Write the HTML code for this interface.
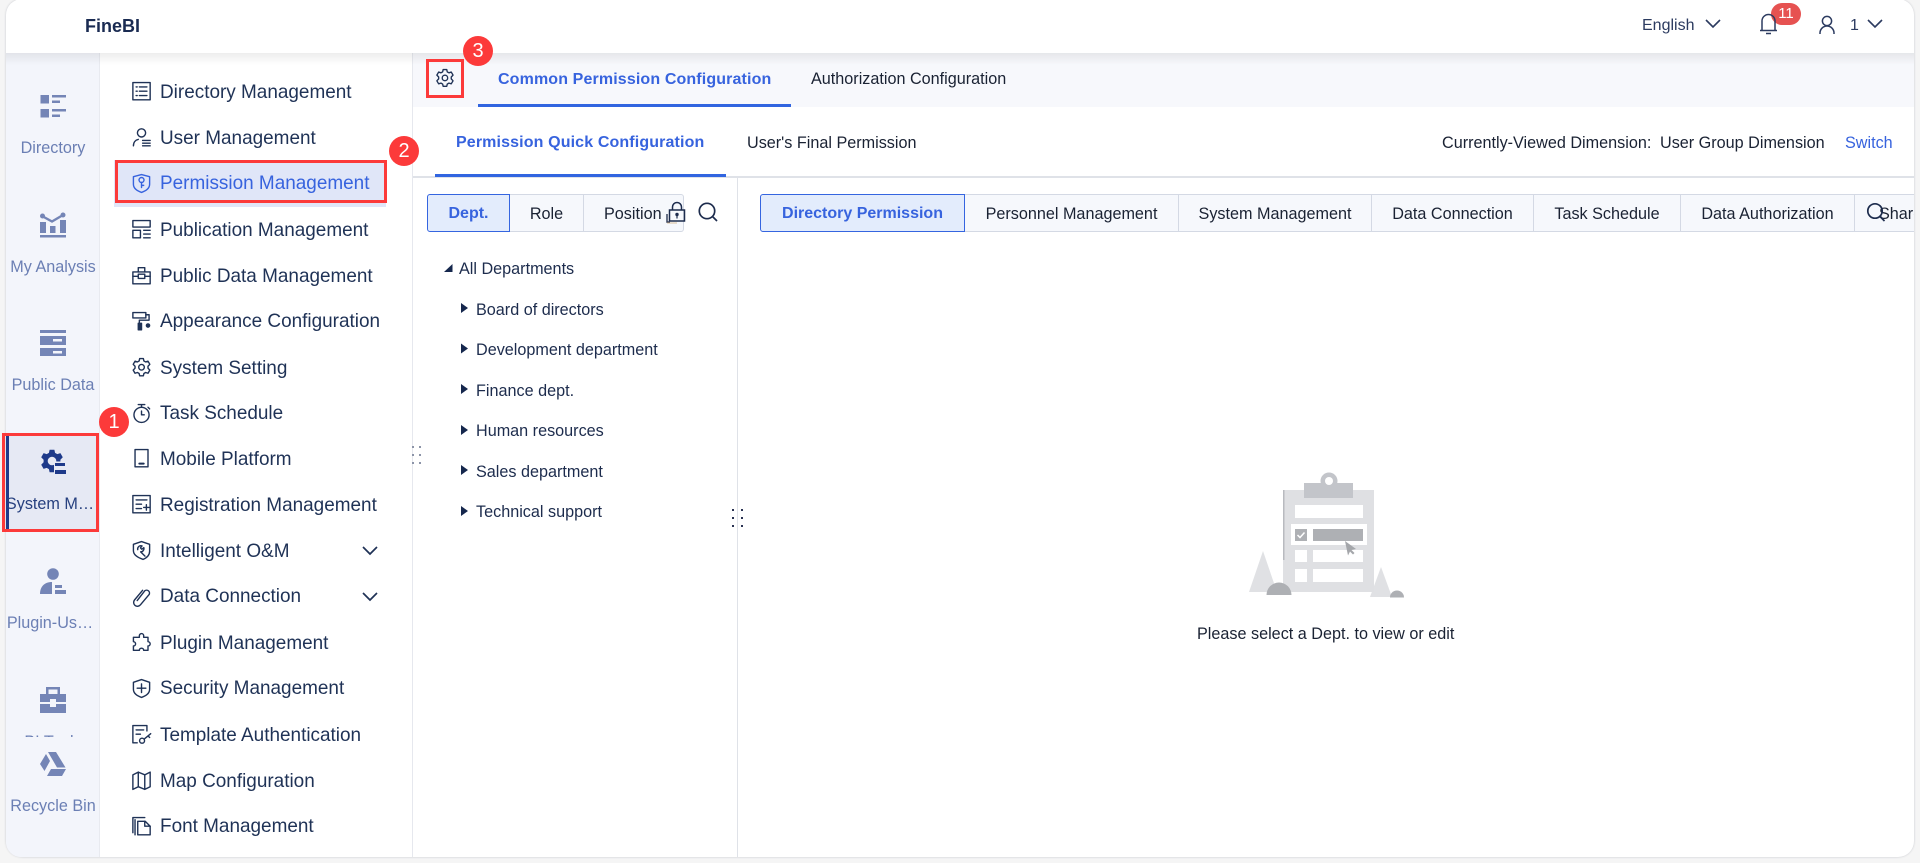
<!DOCTYPE html>
<html><head><meta charset="utf-8"><title>FineBI</title>
<style>
html,body{margin:0;padding:0;width:1920px;height:863px;overflow:hidden;background:#f5f5f5;font-family:"Liberation Sans",Arial,sans-serif;}
#card{position:absolute;left:6px;top:-1px;width:1908px;height:858px;background:#fff;border-radius:16px;overflow:hidden;box-shadow:0 0 2px #c4c6cc;}
.a{position:absolute;white-space:nowrap;}
.b{position:absolute;box-sizing:border-box;}
.m{position:absolute;left:160px;font-size:18.95px;line-height:24px;color:#1f3256;white-space:nowrap;}
.n{position:absolute;left:6px;width:94px;text-align:center;font-size:16.2px;line-height:20px;color:#6b7fb4;white-space:nowrap;}
.t{position:absolute;font-size:16.2px;line-height:20px;white-space:nowrap;color:#1a2233;}
.tr{position:absolute;font-size:16.2px;line-height:20px;white-space:nowrap;color:#1d2c4d;}
.bd{font-weight:bold;font-size:16px;color:#3763de;letter-spacing:.13px;}
.seg{position:absolute;top:194px;height:38px;box-sizing:border-box;background:#f6f8fc;border:1px solid #d4d9e4;border-left:0;text-align:center;font-size:16.2px;line-height:38px;color:#1a2233;white-space:nowrap;overflow:hidden;}
.seg.on{background:#e3ecfc;border:1px solid #3565e0;font-weight:bold;font-size:16px;color:#3763de;}
.c{position:absolute;width:30px;height:30px;border-radius:50%;background:#fc3a3a;color:#fff;font-size:20px;line-height:30px;text-align:center;}
.bx{position:absolute;box-sizing:border-box;border:3px solid #fc3a3a;}
svg{position:absolute;left:0;top:0;}
.i{fill:none;stroke:#1f3256;stroke-width:1.3;stroke-linejoin:round;stroke-linecap:round;}
</style></head><body>
<div id="card"></div>

<!-- backgrounds -->
<div class="b" style="left:6px;top:53px;width:94px;height:804px;background:#f3f5fb;border-bottom-left-radius:15px;border-right:1px solid #e8eaf0;"></div>
<div class="b" style="left:6px;top:433px;width:94px;height:99px;background:#e6e9f4;"></div>
<div class="b" style="left:6px;top:436px;width:3px;height:93px;background:#1f3a8a;"></div>
<div class="b" style="left:412px;top:53px;width:1px;height:804px;background:#e6e8ee;"></div>
<div class="b" style="left:413px;top:53px;width:1501px;height:54px;background:#f7f8fc;"></div>
<div class="b" style="left:114px;top:160px;width:272px;height:47px;background:#e0e6f8;"></div>
<div class="b" style="left:6px;top:53px;width:1908px;height:12px;background:linear-gradient(#00000012,#00000000);"></div>
<div class="b" style="left:413px;top:176px;width:1501px;height:2px;background:#dfe2e8;"></div>
<div class="b" style="left:737px;top:178px;width:1px;height:679px;background:#dfe2e8;"></div>
<div class="b" style="left:478px;top:104px;width:313px;height:3px;background:#3165e0;"></div>
<div class="b" style="left:435px;top:174px;width:291px;height:3px;background:#3165e0;"></div>

<!-- header -->
<div class="a" style="left:85px;top:15px;font-size:18px;line-height:22px;font-weight:bold;color:#1a2b52;">FineBI</div>
<div class="a" style="left:1642px;top:16px;font-size:16px;line-height:20px;color:#2c3b60;">English</div>
<div class="a" style="left:1850px;top:16px;font-size:16px;line-height:20px;color:#2c3b60;">1</div>
<div class="b" style="left:1771px;top:3px;width:30px;height:22px;border-radius:11px;background:#e65251;color:#fff;font-size:15px;line-height:21px;text-align:center;">11</div>

<!-- left nav labels -->
<div class="n" style="top:138px;">Directory</div>
<div class="n" style="top:257px;">My Analysis</div>
<div class="n" style="top:375px;">Public Data</div>
<div class="n" style="top:494px;color:#27407f;left:0;width:100px;">System M…</div>
<div class="n" style="top:613px;left:0;width:100px;">Plugin-Us…</div>
<div class="b" style="left:6px;top:700px;width:94px;height:37px;overflow:hidden;"><div class="n" style="left:0;top:32px;">BI Tools</div></div>
<div class="n" style="top:796px;">Recycle Bin</div>

<!-- sidebar labels -->
<div class="m" style="top:81px;">Directory Management</div>
<div class="m" style="top:127px;">User Management</div>
<div class="m" style="top:172px;color:#3763de;">Permission Management</div>
<div class="m" style="top:219px;">Publication Management</div>
<div class="m" style="top:265px;">Public Data Management</div>
<div class="m" style="top:310px;">Appearance Configuration</div>
<div class="m" style="top:357px;">System Setting</div>
<div class="m" style="top:402px;">Task Schedule</div>
<div class="m" style="top:448px;">Mobile Platform</div>
<div class="m" style="top:494px;">Registration Management</div>
<div class="m" style="top:540px;">Intelligent O&amp;M</div>
<div class="m" style="top:585px;">Data Connection</div>
<div class="m" style="top:632px;">Plugin Management</div>
<div class="m" style="top:677px;">Security Management</div>
<div class="m" style="top:724px;">Template Authentication</div>
<div class="m" style="top:770px;">Map Configuration</div>
<div class="m" style="top:815px;">Font Management</div>

<!-- tabs -->
<div class="t bd" style="left:498px;top:70px;">Common Permission Configuration</div>
<div class="t" style="left:811px;top:69px;">Authorization Configuration</div>
<div class="t bd" style="left:456px;top:133px;">Permission Quick Configuration</div>
<div class="t" style="left:747px;top:133px;">User's Final Permission</div>
<div class="t" style="left:1442px;top:133px;">Currently-Viewed Dimension:</div>
<div class="t" style="left:1660px;top:133px;">User Group Dimension</div>
<div class="t" style="left:1845px;top:133px;color:#3763de;">Switch</div>

<div class="seg on" style="left:427px;width:83px;border-radius:3px 0 0 3px;">Dept.</div>
<div class="seg" style="left:510px;width:74px;">Role</div>
<div class="seg" style="left:584px;width:100px;border-radius:0 3px 3px 0;text-align:left;padding-left:20px;">Position</div>

<div class="seg on" style="left:760px;width:205px;border-radius:3px 0 0 3px;">Directory Permission</div>
<div class="seg" style="left:965px;width:214px;">Personnel Management</div>
<div class="seg" style="left:1179px;width:193px;">System Management</div>
<div class="seg" style="left:1372px;width:162px;">Data Connection</div>
<div class="seg" style="left:1534px;width:147px;">Task Schedule</div>
<div class="seg" style="left:1681px;width:174px;">Data Authorization</div>
<div class="seg" style="left:1855px;width:59px;text-align:left;padding-left:24px;border-right:0;">Share</div>

<!-- tree -->
<div class="tr" style="left:459px;top:259px;">All Departments</div>
<div class="tr" style="left:476px;top:300px;">Board of directors</div>
<div class="tr" style="left:476px;top:340px;">Development department</div>
<div class="tr" style="left:476px;top:381px;">Finance dept.</div>
<div class="tr" style="left:476px;top:421px;">Human resources</div>
<div class="tr" style="left:476px;top:462px;">Sales department</div>
<div class="tr" style="left:476px;top:502px;">Technical support</div>

<div class="t" style="left:1197px;top:624px;">Please select a Dept. to view or edit</div>

<!-- all icons -->
<svg width="1920" height="863" viewBox="0 0 1920 863">
  <!-- header icons -->
  <path d="M1706 20l7 7 7-7" fill="none" stroke="#2c3b60" stroke-width="1.6"/>
  <path d="M1868 20l7 7 7-7" fill="none" stroke="#2c3b60" stroke-width="1.6"/>
  <path d="M1760 30.500h17M1762 30v-9a6.500 6.500 0 0 1 13 0v9M1766 33.500h5" fill="none" stroke="#2c3b60" stroke-width="1.5"/>
  <circle cx="1827" cy="21" r="4.600" fill="none" stroke="#2c3b60" stroke-width="1.5"/>
  <path d="M1820 34v-1a7 7 0 0 1 14 0v1" fill="none" stroke="#2c3b60" stroke-width="1.5"/>

  <!-- left nav -->
  <g fill="#7485b6">
    <rect x="40.500" y="95" width="8.500" height="8.500"/><rect x="40.500" y="109" width="8.500" height="8.500"/>
    <rect x="52" y="95" width="14" height="2.500"/><rect x="52" y="100.500" width="8" height="2.500"/>
    <rect x="52" y="109" width="14" height="2.500"/><rect x="52" y="114.500" width="8" height="2.500"/>

    <rect x="40" y="222" width="6" height="11"/><rect x="50" y="226" width="5.500" height="7"/><rect x="60" y="220" width="6" height="13"/>
    <rect x="40" y="235" width="26" height="2.500"/>
    <path d="M42 216l10 5.500L63 215" fill="none" stroke="#7485b6" stroke-width="2.400"/>
    <circle cx="42.500" cy="216" r="2.500"/><circle cx="63" cy="215" r="2.500"/>

    <rect x="40" y="330" width="26" height="3"/>
    <path fill-rule="evenodd" d="M40 336h26v9H40zM53 339v2.500h9V339z"/>
    <path fill-rule="evenodd" d="M40 348h26v8H40zM53 351v2.500h9V351z"/>

    <circle cx="53" cy="574" r="5.800"/>
    <path d="M40 594c0-7 4-12 12-12v12z"/>
    <rect x="55" y="585" width="7" height="3"/><rect x="55" y="590" width="11" height="4"/>

    <path fill-rule="evenodd" d="M46 694v-7h14v7h6v8H56v-3h-6v3H40v-8zM48.500 694h9v-4.500h-9z"/>
    <path d="M40 704h10v3h6v-3h10v9H40z"/>

    <path d="M48 752h8l9.500 15.500H57zM46 754l4 7-5.500 10L40 764zM47 776l4-7h15l-4 7z"/>
  </g>
  <!-- active nav gear -->
  <path transform="translate(39.400,448.400) scale(1.4)" fill="#1e3a8a" d="M7.300 1h3.400l.5 2.200 1.600.9 2.200-.7 1.700 2.900-1.700 1.800v1.800l1.700 1.800-1.700 2.900-2.200-.7-1.600.9-.5 2.200H7.300l-.5-2.200-1.600-.9-2.200.7-1.700-2.900L3 9.900V8.100L1.300 6.300 3 3.400l2.200.7 1.600-.9z"/>
  <circle cx="52" cy="461" r="4.300" fill="#e6e9f4"/>
  <rect x="54" y="461.500" width="13" height="14" fill="#e6e9f4"/>
  <rect x="55" y="463" width="10" height="3" fill="#1e3a8a"/><rect x="55" y="470" width="11" height="4" fill="#1e3a8a"/>

  <!-- sidebar icons -->
  <g class="i" transform="translate(131.800,81.500) scale(1.08)"><rect x="1" y="1" width="16" height="16"/><path d="M4 5h1M7 5h7M4 9h1M7 9h7M4 13h1M7 13h7"/></g>
  <g class="i" transform="translate(131.800,127.500) scale(1.08)"><circle cx="9" cy="5" r="3.800"/><path d="M1.500 17c0-3.500 2-5.500 4.500-6M10 12h7M10 14.500h7M10 17h7"/></g>
  <g class="i" style="stroke:#3763de" transform="translate(131.800,173.500) scale(1.08)"><path d="M1.500 3L9 1l7.500 2v7c0 3.500-3 6-7.500 7.500C4.500 16 1.500 13.500 1.500 10z"/><circle cx="9" cy="6" r="2.300"/><path d="M9 8.300V13M9 11h2"/></g>
  <g class="i" transform="translate(131.800,219.500) scale(1.08)"><rect x="1" y="1" width="16" height="6"/><rect x="1" y="10" width="7" height="7"/><path d="M11 10h6M11 13.500h6M11 17h6"/></g>
  <g class="i" transform="translate(131.800,265.500) scale(1.08)"><rect x="1" y="6" width="16" height="11"/><path d="M6 6V2h6v4M1 10h5M12 10h5M6 8h6v4H6z"/></g>
  <g class="i" transform="translate(131.800,311.500) scale(1.08)"><rect x="1" y="1" width="12" height="5"/><path d="M13 3h3v5H7v3"/><rect x="6" y="11" width="3" height="6" fill="#1f3256"/><circle cx="15" cy="13" r="1.500" fill="#1f3256"/></g>
  <g class="i" transform="translate(131.800,357.500) scale(1.08)"><path d="M7.300 1h3.400l.5 2.200 1.600.9 2.200-.7 1.700 2.900-1.700 1.800v1.800l1.700 1.800-1.700 2.900-2.200-.7-1.600.9-.5 2.200H7.300l-.5-2.200-1.600-.9-2.200.7-1.700-2.900L3 9.900V8.100L1.300 6.300 3 3.400l2.200.7 1.600-.9z"/><circle cx="9" cy="9" r="2.600"/></g>
  <g class="i" transform="translate(131.800,403.500) scale(1.08)"><circle cx="9" cy="10.500" r="7"/><path d="M6 1h6M9 1v2.500M9 7v3.500h2.500M15 3.500l1.500 1.500"/></g>
  <g class="i" transform="translate(131.800,448.500) scale(1.08)"><rect x="3" y="1" width="12" height="16"/><path d="M7 14h4" stroke-width="1.800"/></g>
  <g class="i" transform="translate(131.800,494.500) scale(1.08)"><rect x="1" y="1" width="16" height="16"/><path d="M4 5h10M4 9h5M4 13h5M11 12h5M13.500 9.500v5"/></g>
  <g class="i" transform="translate(131.800,540.500) scale(1.08)"><path d="M1.500 3.500L9 1l7.500 2.500V10c0 3.500-2.500 6-6 7.500C4.500 15.500 1.500 13 1.500 9.500z"/><path d="M5.500 8.500a3 3 0 0 1 4-3.500L8 6.800l1.300 1.300 1.800-1.500a3 3 0 0 1-2.900 3.900l4 4"/></g>
  <g class="i" transform="translate(131.800,586.500) scale(1.08)"><path d="M5 13L12 4a2.700 2.700 0 0 1 4 3.500l-8 9.500a3.500 3.500 0 0 1-5.500-4.500L10 3.500"/></g>
  <g class="i" transform="translate(131.800,632.500) scale(1.08)"><path d="M7 3a2 2 0 0 1 4 0v1.500h4v4a2 2 0 0 1 0 4h0v4H11a2 2 0 0 0-4 0H1.500v-4a2 2 0 0 0 0-4v0l0-4H7z"/></g>
  <g class="i" transform="translate(131.800,678.500) scale(1.08)"><path d="M1.500 3.500L9 1l7.500 2.500V10c0 3.500-3 6-7.500 7.500C4.500 16 1.500 13.500 1.500 10z"/><path d="M5 9h8M9 5v8"/></g>
  <g class="i" transform="translate(131.800,724.500) scale(1.08)"><path d="M1 17V1h13v5M4 5h7M4 9h4M1 17h4"/><circle cx="9.500" cy="15" r="2.300"/><path d="M11.500 13.500l6-5M15 10.500l1.500 1.500"/></g>
  <g class="i" transform="translate(131.800,770.500) scale(1.08)"><path d="M1 4l5-2.500 6 2.500 5-2.500V15l-5 2.500L6 15l-5 2.500zM6 1.500V15M12 4v13.500"/></g>
  <g class="i" transform="translate(131.800,816.500) scale(1.08)"><path d="M3 17V3M1 15V1h11"/><path d="M5.500 17V4.500h7l4.500 4.500v8z"/><path d="M12 4.500V9h5"/></g>
  <path d="M363 547l7 7 7-7M363 593l7 7 7-7" fill="none" stroke="#1f3256" stroke-width="1.700"/>

  <!-- gear tab icon -->
  <g class="i" style="stroke-width:1.300" transform="translate(435.500,68.500) scale(1.05)"><path d="M7.300 1h3.400l.5 2.200 1.600.9 2.200-.7 1.700 2.900-1.700 1.800v1.800l1.700 1.800-1.700 2.900-2.200-.7-1.600.9-.5 2.200H7.300l-.5-2.200-1.600-.9-2.200.7-1.700-2.900L3 9.900V8.100L1.300 6.300 3 3.400l2.200.7 1.600-.9z"/><circle cx="9" cy="9" r="2.600"/></g>

  <!-- lock + search -->
  <g fill="none" stroke="#1d2c4d" stroke-width="1.500">
    <rect x="669.500" y="210" width="15" height="11"/>
    <path d="M672.500 210v-3a4.500 4.500 0 0 1 9 0v3"/>
    <path d="M667 214v8h3" stroke="#3a4560"/>
  </g>
  <path d="M667 223h10" stroke="#c89b5e" stroke-width="1" opacity=".6"/>
  <circle cx="677" cy="214.500" r="1.700" fill="#1d2c4d"/><rect x="676.400" y="215" width="1.200" height="3.500" fill="#1d2c4d"/>
  <g fill="none" stroke="#1d2c4d" stroke-width="1.700">
    <circle cx="707" cy="211" r="7.700"/><path d="M712.500 216.500l4.500 4.500"/>
    <circle cx="1875" cy="211" r="7.200"/><path d="M1880 216.500l4.500 4.500"/>
  </g>

  <!-- tree arrows -->
  <g fill="#15274d">
    <path d="M444 272l8.500-8v8z"/>
    <path d="M461 303v10l7-5zM461 343.500v10l7-5zM461 384v10l7-5zM461 425v10l7-5zM461 465v10l7-5zM461 506v10l7-5z"/>
  </g>

  <!-- drag handles -->
  <g fill="#8c94a8">
    <rect x="412" y="446" width="2" height="2"/><rect x="419" y="446" width="2" height="2"/>
    <rect x="412" y="454" width="2" height="2"/><rect x="419" y="454" width="2" height="2"/>
    <rect x="412" y="462" width="2" height="2"/><rect x="419" y="462" width="2" height="2"/>
  </g>
  <g fill="#2a3252">
    <rect x="732" y="509" width="2" height="2"/><rect x="741" y="509" width="2" height="2"/>
    <rect x="732" y="517" width="2" height="2"/><rect x="741" y="517" width="2" height="2"/>
    <rect x="732" y="525" width="2" height="2"/><rect x="741" y="525" width="2" height="2"/>
  </g>

  <!-- empty state -->
  <path d="M1263 551l14 41h-28z" fill="#e0e1e4"/>
  <path d="M1381 567l11 30h-22z" fill="#e0e1e4"/>
  <rect x="1283" y="490" width="91" height="102" fill="#dfe0e3"/>
  <rect x="1283" y="490" width="1.500" height="70" fill="#b8babf"/>
  <circle cx="1329" cy="481" r="8.500" fill="#c3c5ca"/>
  <rect x="1304" y="483" width="49" height="15" fill="#c3c5ca"/>
  <circle cx="1329" cy="481" r="4" fill="#fff"/>
  <rect x="1295" y="505" width="68" height="13" fill="#fff"/>
  <rect x="1291" y="524" width="76" height="21" fill="#fff"/>
  <rect x="1295" y="529" width="12" height="12" fill="#aeb0b4"/>
  <path d="M1297.500 535l2.500 2.500 4.500-5" fill="none" stroke="#fff" stroke-width="1.500"/>
  <rect x="1313" y="529" width="50" height="12" fill="#aeb0b4"/>
  <rect x="1295" y="550" width="12" height="12" fill="#fff"/><rect x="1313" y="550" width="50" height="12" fill="#fff"/>
  <rect x="1295" y="569" width="12" height="13" fill="#fff"/><rect x="1313" y="569" width="50" height="13" fill="#fff"/>
  <path d="M1345 541l11 8-4.500 1 3 3-1.500 1.500-3-3-2 4z" fill="#a4a6aa"/>
  <path d="M1266.500 595a12.500 12.500 0 0 1 25 0z" fill="#aeb0b4"/>
  <path d="M1390 597.500a7 7 0 0 1 14 0z" fill="#aeb0b4"/>
</svg>

<!-- annotations -->
<div class="bx" style="left:2px;top:433px;width:97px;height:99px;"></div>
<div class="bx" style="left:115px;top:160px;width:272px;height:43px;"></div>
<div class="bx" style="left:426px;top:59px;width:38px;height:39px;"></div>
<div class="c" style="left:99px;top:407px;">1</div>
<div class="c" style="left:389px;top:136px;">2</div>
<div class="c" style="left:463px;top:36px;">3</div>
</body></html>
